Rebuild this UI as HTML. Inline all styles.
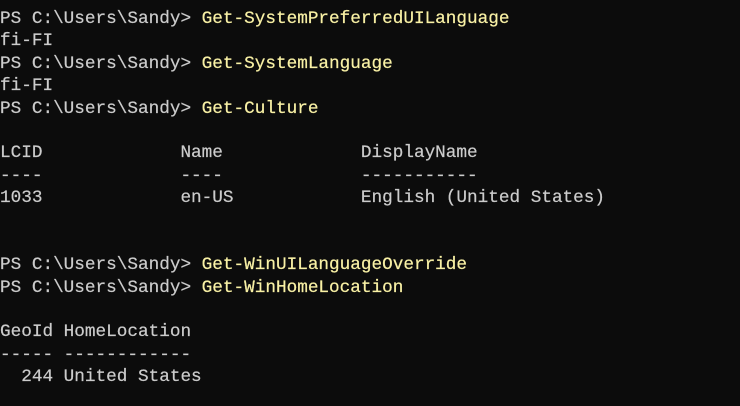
<!DOCTYPE html>
<html><head><style>
html,body{margin:0;padding:0;background:#0c0c0c;width:740px;height:406px;overflow:hidden}
pre{margin:0;position:absolute;left:0px;top:8px;font-family:"Liberation Mono",monospace;font-size:17.7px;line-height:22.37px;color:#cccccc;-webkit-text-stroke:0.2px #cccccc}
.y{color:#f9f1a5;-webkit-text-stroke:0.2px #f9f1a5}
</style></head><body>
<pre>PS C:\Users\Sandy&gt; <span class="y">Get-SystemPreferredUILanguage</span>
fi-FI
PS C:\Users\Sandy&gt; <span class="y">Get-SystemLanguage</span>
fi-FI
PS C:\Users\Sandy&gt; <span class="y">Get-Culture</span>

LCID             Name             DisplayName
----             ----             -----------
1033             en-US            English (United States)


PS C:\Users\Sandy&gt; <span class="y">Get-WinUILanguageOverride</span>
PS C:\Users\Sandy&gt; <span class="y">Get-WinHomeLocation</span>

GeoId HomeLocation
----- ------------
  244 United States</pre>
</body></html>
